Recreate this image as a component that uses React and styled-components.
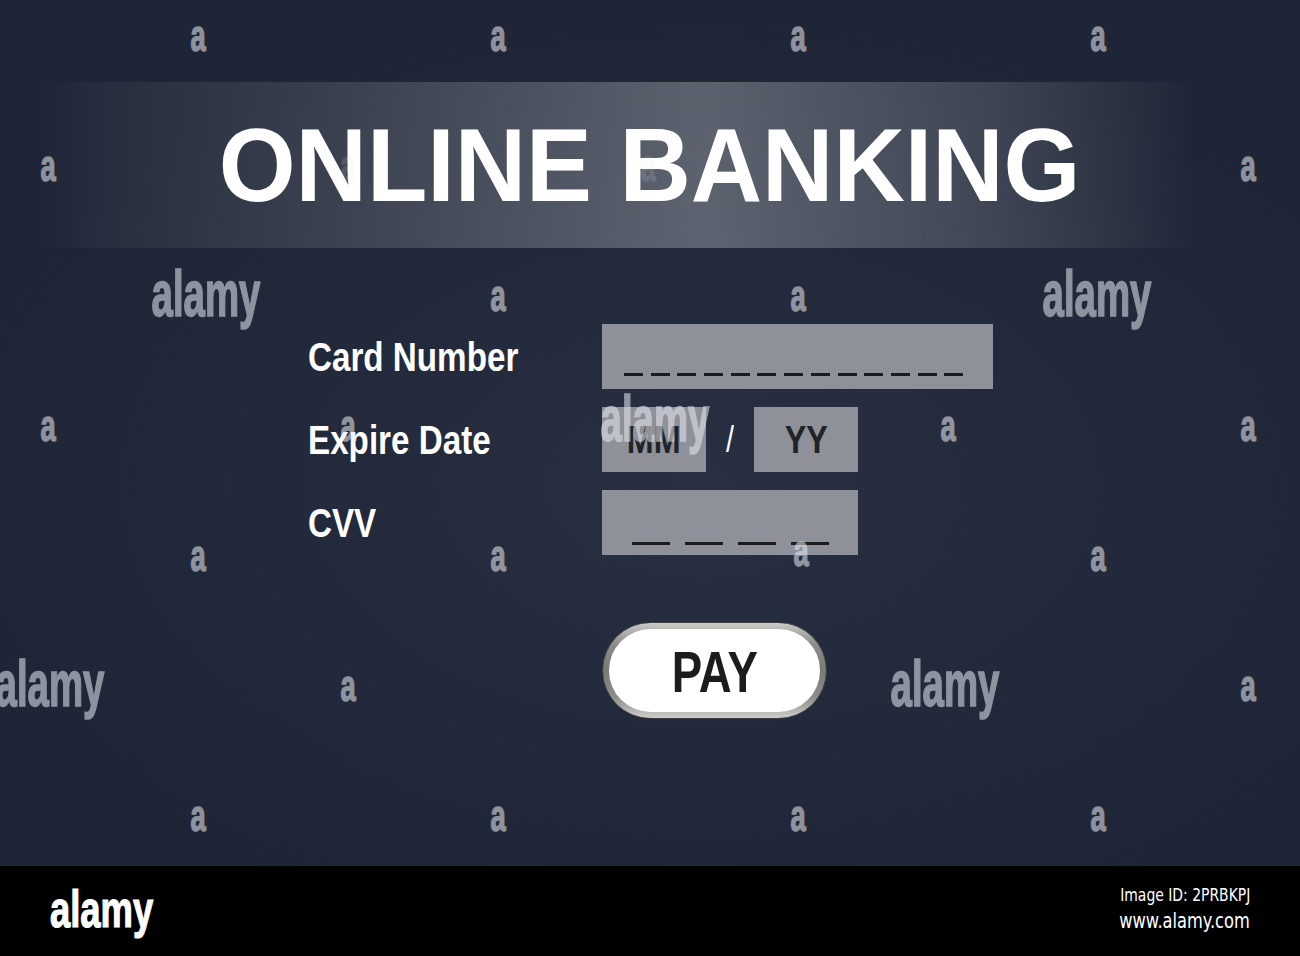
import React from "react";
import styled, { createGlobalStyle } from "styled-components";

const GlobalStyle = createGlobalStyle`
  html, body {
    margin: 0;
    padding: 0;
    background: #000;
  }
  body {
    font-family: "Liberation Sans", Arial, sans-serif;
  }
`;

const Page = styled.div`
  width: 1300px;
  height: 956px;
  display: flex;
  flex-direction: column;
  overflow: hidden;
`;

const Canvas = styled.main`
  position: relative;
  height: 866px;
  flex: none;
  display: flex;
  flex-direction: column;
  padding-top: 82px;
  box-sizing: border-box;
  background: radial-gradient(
    ellipse 60% 55% at 54% 56%,
    #283042 0%,
    #222a3b 45%,
    #1e2536 100%
  );
  overflow: hidden;
`;

const Banner = styled.header`
  height: 166px;
  display: flex;
  align-items: center;
  justify-content: center;
  background: linear-gradient(
    90deg,
    rgba(255, 255, 255, 0) 3%,
    rgba(255, 255, 255, 0.04) 8%,
    rgba(255, 255, 255, 0.12) 26%,
    rgba(255, 255, 255, 0.27) 54%,
    rgba(255, 255, 255, 0.14) 76%,
    rgba(255, 255, 255, 0.04) 88%,
    rgba(255, 255, 255, 0) 92%
  );
`;

const Title = styled.h1`
  margin: 0;
  color: #fff;
  font-size: 104px;
  font-weight: 700;
  line-height: 1;
  transform: scaleX(0.95);
  white-space: nowrap;
`;

const Form = styled.section`
  display: grid;
  grid-template-columns: 294px auto;
  row-gap: 18px;
  align-items: center;
  margin: 76px 0 0 308px;
`;

const Label = styled.span`
  display: inline-block;
  color: #fff;
  font-size: 40px;
  font-weight: 700;
  line-height: 1;
  transform: scaleX(0.83);
  transform-origin: left center;
  white-space: nowrap;
`;

const Field = styled.div`
  width: ${(p) => p.$w}px;
  height: 65px;
  box-sizing: border-box;
  background: #8e9199;
  display: flex;
  align-items: ${(p) => (p.$dashes ? "flex-end" : "center")};
  justify-content: ${(p) => (p.$dashes ? "flex-start" : "center")};
  gap: ${(p) => p.$gap || 0}px;
  padding: ${(p) => p.$pad || "0"};
`;

const Dash = styled.span`
  width: ${(p) => p.$w}px;
  height: 3px;
  background: #1b1c1f;
  flex: none;
`;

const DateRow = styled.div`
  display: flex;
  align-items: center;
`;

const Slash = styled.span`
  width: 48px;
  text-align: center;
  color: #fff;
  font-size: 36px;
  line-height: 1;
  transform: scaleX(0.8);
`;

const FieldText = styled.span`
  display: inline-block;
  color: #222326;
  font-size: 38px;
  font-weight: 700;
  line-height: 1;
  transform: scaleX(0.85);
`;

const PayRing = styled.button`
  grid-column: 2;
  margin-top: 49px;
  width: 225px;
  height: 97px;
  padding: 6px;
  border: 1px solid #3a3c40;
  border-radius: 49px;
  box-sizing: border-box;
  background: linear-gradient(
    180deg,
    #cacac6 0%,
    #8c8c88 22%,
    #7a7a76 50%,
    #8c8c88 78%,
    #cdcdc9 100%
  );
  cursor: pointer;
  font-family: inherit;
`;

const PayFace = styled.span`
  display: flex;
  align-items: center;
  justify-content: center;
  width: 100%;
  height: 100%;
  border-radius: 42px;
  background: #fff;
`;

const PayText = styled.span`
  display: inline-block;
  color: #1c1c1c;
  font-size: 57px;
  font-weight: 700;
  line-height: 1;
  transform: scaleX(0.8);
  margin-top: 4px;
`;

const Marks = styled.div`
  position: absolute;
  inset: 0;
  pointer-events: none;
`;

const Mark = styled.span.attrs((p) => ({
  style: { left: p.$x, top: p.$y, opacity: p.$faint ? 0.14 : 0.56 },
}))`
  position: absolute;
  color: #e4e8ef;
  -webkit-text-stroke: ${(p) => (p.$word ? 1.6 : 1.4)}px #e4e8ef;
  font-weight: 700;
  font-size: ${(p) => (p.$word ? 64 : 44)}px;
  line-height: 1;
  white-space: nowrap;
  transform: translate(-50%, -50%) scaleX(${(p) => (p.$word ? 0.6 : 0.62)});
`;

const Footer = styled.footer`
  flex: 1;
  background: #000;
  display: flex;
  align-items: center;
  justify-content: space-between;
  padding: 0 50px;
`;

const Logo = styled.span`
  display: inline-block;
  color: #fff;
  -webkit-text-stroke: 1.2px #fff;
  font-size: 52px;
  font-weight: 700;
  line-height: 1;
  transform: scaleX(0.7);
  transform-origin: left center;
  margin-top: -4px;
`;

const Credits = styled.div`
  display: flex;
  flex-direction: column;
  align-items: flex-end;
  gap: 7px;
  color: #fff;
  font-family: "DejaVu Sans Condensed", "DejaVu Sans", sans-serif;
  margin-top: -4px;
`;

const CreditLine = styled.span`
  font-size: ${(p) => p.$size}px;
  line-height: 1;
  transform: scaleX(0.86);
  transform-origin: right center;
`;

// watermark grid: [x, y, isWord, faint]
const marks = [
  [198, 36], [498, 36], [798, 36], [1098, 36],
  [48, 166], [348, 166, false, true], [648, 166, false, true], [1248, 166],
  [206, 294, true], [498, 296], [798, 296], [1097, 294, true],
  [48, 426], [348, 426], [655, 419, true], [948, 426], [1248, 426],
  [198, 556], [498, 556], [801, 551], [1098, 556],
  [50, 684, true], [348, 686], [945, 684, true], [1248, 686],
  [198, 816], [498, 816], [798, 816], [1098, 816],
];

const App = () => {
  return (
    <Page>
      <GlobalStyle />
      <Canvas>
        <Banner>
          <Title>ONLINE BANKING</Title>
        </Banner>

        <Form>
          <Label>Card Number</Label>
          <Field $w={391} $dashes $gap={7.7} $pad="0 0 13px 22px">
            {Array.from({ length: 13 }, (_, i) => (
              <Dash key={i} $w={19} />
            ))}
          </Field>

          <Label>Expire Date</Label>
          <DateRow>
            <Field $w={104}>
              <FieldText>MM</FieldText>
            </Field>
            <Slash>/</Slash>
            <Field $w={104}>
              <FieldText>YY</FieldText>
            </Field>
          </DateRow>

          <Label>CVV</Label>
          <Field $w={256} $dashes $gap={15} $pad="0 0 10px 30px">
            {Array.from({ length: 4 }, (_, i) => (
              <Dash key={i} $w={38} />
            ))}
          </Field>

          <PayRing type="button">
            <PayFace>
              <PayText>PAY</PayText>
            </PayFace>
          </PayRing>
        </Form>

        <Marks>
          {marks.map(([x, y, word, faint], i) => (
            <Mark key={i} $x={x} $y={y} $word={word} $faint={faint}>
              {word ? "alamy" : "a"}
            </Mark>
          ))}
        </Marks>
      </Canvas>

      <Footer>
        <Logo>alamy</Logo>
        <Credits>
          <CreditLine $size={18}>Image ID: 2PRBKPJ</CreditLine>
          <CreditLine $size={21}>www.alamy.com</CreditLine>
        </Credits>
      </Footer>
    </Page>
  );
};

export default App;
